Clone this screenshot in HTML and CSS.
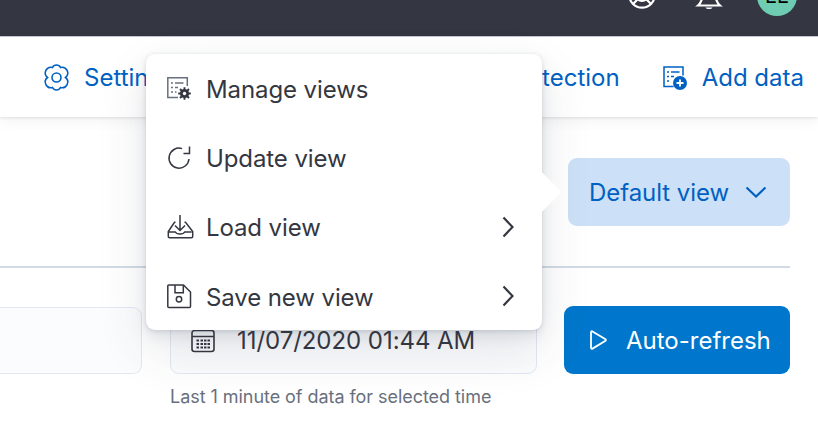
FILE: index.html
```html
<!DOCTYPE html>
<html lang="en">
<head>
<meta charset="utf-8">
<title>Views menu</title>
<link rel="stylesheet" href="styles.css">
</head>
<body>
<header class="topbar">
  <svg class="top-icon ring" viewBox="0 0 28 28"><circle cx="14" cy="14" r="12.700"/><circle cx="14" cy="14" r="6"/><path d="M9.800 18.200 5 23M18.200 18.200 23 23"/></svg>
  <svg class="top-icon bell" viewBox="0 0 28 28"><path d="M8 10c0 7-1 11-5 14.500h22c-4-3.500-5-7.500-5-14.500"/><path class="fill" d="M10.500 26.500h7c-.5 1-2 1.500-3.500 1.500s-3-.5-3.500-1.500z"/></svg>
  <div class="avatar">EE</div>
</header>

<nav class="subnav">
  <a class="nav-link settings">
    <svg class="gear-icon" viewBox="0 0 25 27"><path d="M8.500 3.500A4.500 4.500 0 0 1 16.500 3.500 5.700 5.700 0 0 1 21.500 13.500 5.700 5.700 0 0 1 16.500 23.500 4.500 4.500 0 0 1 8.500 23.500 5.700 5.700 0 0 1 3.500 13.500 5.700 5.700 0 0 1 8.500 3.500Z"/><circle cx="12.500" cy="13.500" r="4.500"/></svg>
    <span>Settings</span>
  </a>
  <a class="nav-link">
    <span>Anomaly detection</span>
  </a>
  <a class="nav-link">
    <svg class="nav-icon" viewBox="0 0 24 24"><path d="M10.500 20.500H1V1h19v8.500"/><path d="M4 6h2M8 6h8.500M4 10.500h2M8 10.500h3M4 15h2"/><circle class="fill-blue" cx="17" cy="17" r="7"/><path class="plus" d="M17 13.500v7M13.500 17h7"/></svg>
    <span>Add data</span>
  </a>
</nav>

<main class="content">
  <div class="view-row">
    <button class="view-btn">Default view
      <svg class="chev" viewBox="0 0 22 12"><path d="M1.500 1.500 11 10.500l9.500-9"/></svg>
    </button>
  </div>
  <hr class="rule">
  <div class="filter-row">
    <div class="field query"></div>
    <div class="date-col">
      <div class="field date">
        <svg class="cal" viewBox="0 0 24 24"><path d="M3.500 1.500h17a2.500 2.500 0 0 1 2.500 2.500v16a2.500 2.500 0 0 1-2.500 2.500h-17A2.500 2.500 0 0 1 1 20V4a2.500 2.500 0 0 1 2.500-2.500zM1 7.500h22"/><path class="dots" d="M5.500 11.500h2.500M9.500 11.500h2.500M13 11.500h2.500M16.500 11.500h2.500M5.500 15h2.500M9.500 15h2.500M13 15h2.500M16.500 15h2.500M5.500 18.500h2.500M9.500 18.500h2.500M13 18.500h2.500M16.500 18.500h2.500"/></svg>
        <span>11/07/2020 01:44 AM</span>
      </div>
      <p class="hint">Last 1 minute of data for selected time</p>
    </div>
    <button class="refresh">
      <svg class="play" viewBox="0 0 17 20"><path d="M1 2.200v15.600a1 1 0 0 0 1.500.8l13-7.800a1 1 0 0 0 0-1.600l-13-7.800A1 1 0 0 0 1 2.200z"/></svg>
      <span>Auto-refresh</span>
    </button>
  </div>
</main>

<div class="menu">
  <div class="menu-item">
    <svg class="menu-icon" viewBox="0 0 24 24"><path class="muted" d="M11 20.500H.8V.8h19.500V9"/><path class="muted" d="M4 6h2M8 6h8.500M4 10.500h2M8 10.500h3M4 15h2M8 15h1.500"/><circle class="gear" cx="17.500" cy="16.500" r="4.600"/><path class="gear-teeth" d="M17.500 10.200v12.600M11.200 16.500h12.600M13 12l9 9M22 12l-9 9"/><circle class="gear-hole" cx="17.500" cy="16.500" r="1.700"/></svg>
    <span>Manage views</span>
  </div>
  <div class="menu-item">
    <svg class="menu-icon" viewBox="0 0 24 24"><path d="M15 2.600A10 10 0 1 0 22 13M22.500.5v7h-6"/></svg>
    <span>Update view</span>
  </div>
  <div class="menu-item">
    <svg class="menu-icon" viewBox="0 0 24 24"><path d="M8.500 7.300H7.500L1.300 16.500v5a1.200 1.200 0 0 0 1.200 1.200h22a1.200 1.200 0 0 0 1.200-1.200v-5L18.500 7.300h-1"/><path d="M1.300 17h7c.8 1.500 2.500 2 4.700 2s3.900-.5 4.700-2h7"/><path d="M13 0v15.500M8 10.500l5 5 5-5"/></svg>
    <span>Load view</span>
    <svg class="arrow" viewBox="0 0 12 22"><path d="M1.500 1.500 10.500 11l-9 9.500"/></svg>
  </div>
  <div class="menu-item">
    <svg class="menu-icon" viewBox="0 0 24 24"><path d="M1.800 1h14.700l7 7v14.500a1 1 0 0 1-1 1H1.800a1 1 0 0 1-1-1V2a1 1 0 0 1 1-1z" stroke-linejoin="round"/><path d="M8 1v7.700h8.300V1"/><circle cx="12" cy="15.300" r="2.700"/></svg>
    <span>Save new view</span>
    <svg class="arrow" viewBox="0 0 12 22"><path d="M1.500 1.500 10.500 11l-9 9.500"/></svg>
  </div>
</div>
</body>
</html>
```
FILE: styles.css
```css
* { box-sizing: border-box; }
html, body { margin: 0; height: 426px; overflow: hidden; }
body { background: #fff; font-family: Inter, "Liberation Sans", sans-serif; color: #343741; }
svg { fill: none; stroke: currentColor; flex: none; display: block; overflow: visible; }

.topbar {
  height: 37px; background: #343741; border-bottom: 1px solid #c9ccd2;
  display: flex; justify-content: flex-end; align-items: flex-end;
  padding: 0 21px 20px 0; overflow: hidden; color: #fff;
}
.top-icon { stroke-width: 2.200; width: 28px; height: 28px; margin-bottom: 7px; }
.ring { margin-right: 39px; }
.bell { margin-right: 34px; }
.bell .fill { fill: #fff; stroke: none; }
.avatar {
  width: 40px; height: 40px; border-radius: 50%; background: #6dccb1; color: #000;
  display: flex; align-items: center; justify-content: center; font-size: 20px; flex: none;
}

.subnav {
  height: 80px; background: #fff; display: flex; align-items: center; justify-content: flex-end;
  padding: 1px 14px 0 44px; color: #0061c2; font-size: 24px; gap: 43px;
  box-shadow: 0 1px 3px rgba(0,0,0,.1), 0 4px 14px rgba(0,0,0,.05);
  position: relative; white-space: nowrap;
}
.nav-link { display: flex; align-items: center; gap: 15px; }
.settings { margin-right: auto; }
.nav-icon { width: 24px; height: 24px; stroke-width: 1.500; }
.gear-icon { width: 25px; height: 27px; stroke-width: 1.600; }
.fill-blue { fill: #0061c2; stroke: none; }
.plus { stroke: #fff; stroke-width: 1.800; }

.content { padding-right: 28px; }
.view-row { display: flex; justify-content: flex-end; padding-top: 41px; }
.view-btn {
  width: 222px; height: 68px; border: 0; border-radius: 9px; background: #cce0f7; color: #0061c2;
  font: inherit; font-size: 24px; letter-spacing: -.05px; display: flex; align-items: center; justify-content: space-between; padding: 0 23px 0 21px;
}
.chev { width: 22px; height: 12px; stroke-width: 2.200; }
.rule { margin: 40px 0 39px; border: 0; height: 2px; background: #d3dae6; }
.filter-row { display: flex; gap: 28px; align-items: flex-start; }
.field { height: 67px; border: 1.500px solid #e3e7f2; border-radius: 9px; background: #fbfcfd; }
.query { flex: 1; border-left: 0; border-radius: 0 9px 9px 0; }
.date-col { width: 367px; flex: none; }
.date { display: flex; align-items: center; gap: 22px; padding: 0 20px; font-size: 24px; letter-spacing: -.05px; white-space: nowrap; }
.cal { width: 24px; height: 24px; stroke-width: 1.600; }
.dots { stroke-width: 1.800; }
.hint { margin: 12px 0 0; font-size: 18px; letter-spacing: -.05px; color: #69707d; white-space: nowrap; }
.refresh {
  width: 226px; height: 68px; margin: -1px 0 0 -1px; border: 0; border-radius: 9px; background: #0077cc; color: #fff;
  font: inherit; font-size: 24px; display: flex; align-items: center; gap: 19px; padding: 0 25px 0 26px; white-space: nowrap;
}
.play { width: 17px; height: 20px; stroke-width: 1.800; }

.menu {
  position: absolute; left: 146px; top: 54px; width: 396px; height: 276px; background: #fff; border-radius: 9px;
  box-shadow: 0 1px 4px rgba(50,60,80,.14), 0 6px 14px rgba(50,60,80,.1), 0 20px 50px rgba(50,60,80,.12);
}
.menu::after {
  content: ""; position: absolute; right: -14px; top: 124px; width: 28px; height: 28px; background: #fff;
  transform: rotate(45deg);
}
.menu-item { height: 69.200px; display: flex; align-items: center; padding: 0 28px 0 21px; font-size: 24px; letter-spacing: -.1px; gap: 15px; }
.menu-item span { flex: 1; margin-top: 2px; }
.menu-icon { width: 24px; height: 24px; stroke-width: 1.500; }
.muted { stroke: #69707d; }
.gear { fill: #343741; stroke: none; }
.gear-teeth { stroke-width: 1.900; }
.gear-hole { fill: #fff; stroke: none; }
.arrow { width: 12px; height: 22px; stroke-width: 2.200; }
```
